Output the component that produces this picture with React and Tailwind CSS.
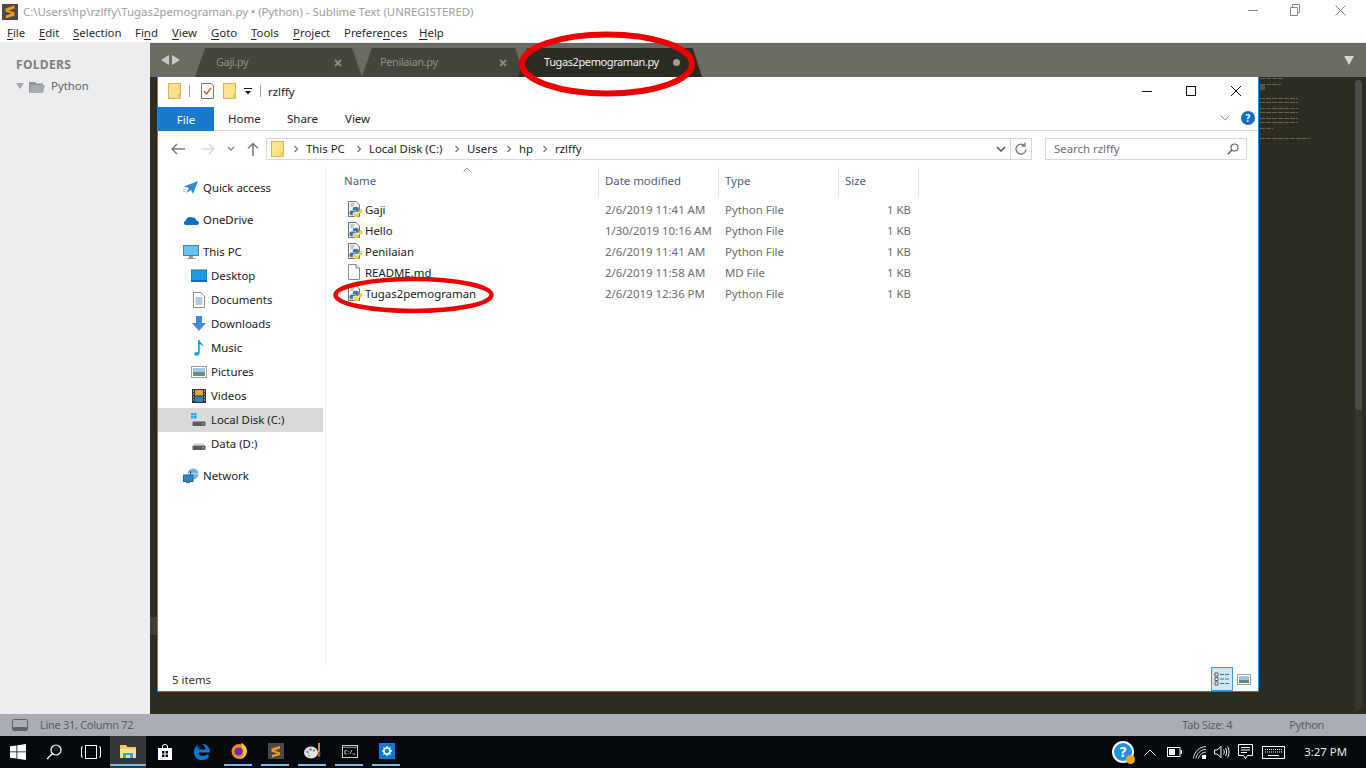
import React from "react";

const Folder = ({ className = "w-[13px] h-[16px]" }) => (
  <svg viewBox="0 0 13 16" className={className}>
    <rect x="0.5" y="0.5" width="12" height="15" fill="#fde18c" stroke="#dcb44c" />
    <rect x="10" y="11" width="3" height="5" fill="#eac45e" />
  </svg>
);

const PyFile = () => (
  <svg viewBox="0 0 16 16" className="w-4 h-4 shrink-0">
    <path d="M1.500 .5H9L12.500 4V15.500H1.500Z" fill="#f6f6f6" stroke="#6f6f6f" />
    <path d="M3.500 3h4M3.500 5h3" stroke="#8b949c" />
    <path d="M8.800 5.800C6.500 5.800 5.800 6.500 5.800 7.800V9H9V9.600H4.600C3.300 9.600 2.500 10.500 2.500 11.900S3.300 14.200 4.600 14.200H5.800V12.800C5.800 11.600 6.800 10.800 8 10.800H10.500C11.300 10.800 11.800 10.200 11.800 9.500V7.800C11.800 6.600 10.800 5.800 8.800 5.800Z" fill="#3a76ab" />
    <path d="M12.400 8.300V9.700C12.400 10.900 11.500 11.500 10.500 11.500H8C7.200 11.500 6.500 12.100 6.500 12.900V14.200C6.500 15.400 7.600 16 9.200 16S12 15.300 12 14.200V13H8.800V12.400H13.400C14.700 12.400 15.500 11.500 15.500 10.200S14.700 8.300 13.400 8.300Z" fill="#f7cf47" />
  </svg>
);

const Blank = () => (
  <svg viewBox="0 0 16 16" className="w-4 h-4 shrink-0">
    <path d="M1.500 .5H9L12.500 4V15.500H1.500Z" fill="#fff" stroke="#8a8a8a" />
    <path d="M9 .5V4H12.500" fill="#eee" stroke="#8a8a8a" />
  </svg>
);

const Ul = ({ a = "", u, b = "" }) => (
  <>
    {a}
    <span className="underline underline-offset-2">{u}</span>
    {b}
  </>
);

const menu = [
  [32, "", "F", "ile"],
  [34, "", "E", "dit"],
  [62, "", "S", "election"],
  [37, "Fi", "n", "d"],
  [39, "", "V", "iew"],
  [40, "", "G", "oto"],
  [42, "", "T", "ools"],
  [51, "", "P", "roject"],
  [75, "Prefere", "n", "ces"],
  [30, "", "H", "elp"],
];

const Tab = ({ w, ml = "", fill, text, color, right, pad, points }) => (
  <div className={`relative h-[29px] flex items-center justify-between ${w} ${ml} ${pad}`}>
    <svg viewBox="0 0 100 29" preserveAspectRatio="none" className="absolute inset-0 w-full h-full">
      <polygon points={points} fill={fill} />
    </svg>
    <span className={`relative text-[11px] tracking-[-0.4px] ${color}`}>{text}</span>
    <span className="relative">{right}</span>
  </div>
);

const TabX = () => (
  <svg viewBox="0 0 8 8" className="w-2 h-2">
    <path d="M1 1l6 6M7 1l-6 6" stroke="#8c8c85" strokeWidth="1.800" />
  </svg>
);

const NavRow = ({ icon, label, indent, active, mb = "" }) => (
  <div className={`h-6 flex items-center ${indent} ${mb} ${active ? "bg-[#d9d9d9]" : ""}`}>
    <span className="w-4 h-4 flex items-center justify-center shrink-0">{icon}</span>
    <span className="text-[11.4px] text-[#1a1a1a] ml-[4px]">{label}</span>
  </div>
);

const Drive = ({ win }) => (
  <svg viewBox="0 0 16 16" className="w-4 h-4">
    {win && <path d="M0 1h2.500v2.500H0zM3 1h2.500v2.500H3zM0 4h2.500v2.500H0zM3 4h2.500v2.500H3z" fill="#18a6ee" />}
    <path d="M2 9.500 3.500 7H12.500L14 9.500Z" fill="#dcdcdc" />
    <rect x="1.500" y="9.500" width="13" height="4.500" rx="1" fill="#5b5b5b" />
    <rect x="11" y="11" width="1.500" height="1.500" fill="#51e34f" />
  </svg>
);

const nav = [
  [
    <svg viewBox="0 0 16 16" className="w-4 h-4"><path d="M15 1 10 14 8 10 3 13 6 8 1 6.500Z" fill="#2f8fdf" /><path d="M0 9h3M0 11.500h2" stroke="#9cc7ea" /></svg>,
    "Quick access", "pl-[25px]", false, "mb-2",
  ],
  [
    <svg viewBox="0 0 16 16" className="w-4 h-4"><path d="M3 13C.5 13 0 9.500 2.500 9 3 6 6 4 9 5.500c2-.5 4 .8 4.200 3 1.800.2 2.800 1.500 2.800 2.500 0 1.200-1 2-2.300 2Z" fill="#0a6fc9" /></svg>,
    "OneDrive", "pl-[25px]", false, "mb-2",
  ],
  [
    <svg viewBox="0 0 16 16" className="w-4 h-4"><rect x=".5" y="1.500" width="15" height="10" fill="#63c6f2" stroke="#5f7f94" /><path d="M6 12h4v2H6zM3.500 14h9v1h-9z" fill="#9a9a9a" /></svg>,
    "This PC", "pl-[25px]", false, "",
  ],
  [
    <svg viewBox="0 0 16 16" className="w-4 h-4"><rect x="0" y="2" width="16" height="11" fill="#1d9be6" stroke="#0f6fb3" /><rect x="0" y="12" width="16" height="2" fill="#0f6fb3" /></svg>,
    "Desktop", "pl-[33px]",
  ],
  [
    <svg viewBox="0 0 16 16" className="w-4 h-4"><path d="M2.500 .5H10L13.500 4V15.500H2.500Z" fill="#fff" stroke="#8a8a8a" /><path d="M4.500 6h7M4.500 8h7M4.500 10h7M4.500 12h7" stroke="#6e93b3" /></svg>,
    "Documents", "pl-[33px]",
  ],
  [
    <svg viewBox="0 0 16 16" className="w-4 h-4"><path d="M5 0h6v7h4l-7 8-7-8h4z" fill="#3a8ddd" /></svg>,
    "Downloads", "pl-[33px]",
  ],
  [
    <svg viewBox="0 0 16 16" className="w-4 h-4"><path d="M7 0h1.500c.5 3 4 3.500 3.500 7-.5-1.500-2-2.500-3.300-2.700V13c0 2-2 3-3.700 2.700C3 15.300 2.700 13.500 4 12.500c1-.7 2-.7 3-.3z" fill="#1c9be8" /></svg>,
    "Music", "pl-[33px]",
  ],
  [
    <svg viewBox="0 0 16 16" className="w-4 h-4"><rect x=".5" y="2.500" width="15" height="11" fill="#fff" stroke="#a0a0a0" /><rect x="2" y="4" width="12" height="4" fill="#9cc9e8" /><rect x="2" y="8" width="12" height="4" fill="#6a8f74" /></svg>,
    "Pictures", "pl-[33px]",
  ],
  [
    <svg viewBox="0 0 16 16" className="w-4 h-4"><rect x="1" y="1" width="14" height="14" fill="#333" /><rect x="4" y="2" width="8" height="5.500" fill="#e0a535" /><rect x="4" y="8.500" width="8" height="5.500" fill="#2f7fc4" /><path d="M2 3h1M2 6h1M2 9h1M2 12h1M13 3h1M13 6h1M13 9h1M13 12h1" stroke="#fff" /></svg>,
    "Videos", "pl-[33px]",
  ],
  [<Drive win />, "Local Disk (C:)", "pl-[33px]", true],
  [<Drive />, "Data (D:)", "pl-[33px]", false, "mb-2"],
  [
    <svg viewBox="0 0 16 16" className="w-4 h-4"><circle cx="10" cy="6" r="5.500" fill="#6fb3de" /><path d="M8 1c-2 3-2 7 0 10M5 6h10" stroke="#cfe6f5" /><rect x="0" y="7" width="10" height="6.500" fill="#2e86c1" stroke="#1d6594" /><path d="M3 14.500h4" stroke="#777" strokeWidth="1.500" /></svg>,
    "Network", "pl-[25px]",
  ],
];

const files = [
  ["Gaji", "2/6/2019 11:41 AM", "Python File", <PyFile />],
  ["Hello", "1/30/2019 10:16 AM", "Python File", <PyFile />],
  ["Penilaian", "2/6/2019 11:41 AM", "Python File", <PyFile />],
  ["README.md", "2/6/2019 11:58 AM", "MD File", <Blank />],
  ["Tugas2pemograman", "2/6/2019 12:36 PM", "Python File", <PyFile />],
];

const Crumb = ({ w, children }) => (
  <span className={`flex items-center ${w} text-[11.4px] text-[#1a1a1a] shrink-0`}>{children}</span>
);
const Sep = () => (
  <svg viewBox="0 0 6 8" className="w-[6px] h-2 mr-[7px] shrink-0">
    <path d="M1.500 1l3 3-3 3" fill="none" stroke="#777" strokeWidth="1.300" />
  </svg>
);

const TaskItem = ({ w = "w-[37px]", children, under, bg = "" }) => (
  <div className={`relative h-8 ${w} ${bg} flex items-center justify-center shrink-0`}>
    {children}
    {under && <div className={`absolute bottom-[2px] h-[2px] bg-[#76b9ed] ${under}`} />}
  </div>
);

const minimapLines = [
  [78, 23], [84, 21], [98, 38], [102, 38], [108, 38], [112, 38], [118, 38], [122, 38], [128, 13], [134, 1], [138, 50],
];

export default function App() {
  return (
    <div className="relative w-[1366px] h-[768px] overflow-hidden flex flex-col bg-white font-['Noto_Sans',sans-serif]">
      {/* Title bar */}
      <div className="h-[24px] flex items-center bg-white shrink-0">
        <svg viewBox="0 0 16 16" className="w-4 h-4 ml-[2px] shrink-0">
          <rect width="16" height="16" fill="#4a4a4a" />
          <path d="M3 6 12 3V6L6 8 12 10V13L3 16 3.500 13 9 11 3 9Z" fill="#f89820" transform="translate(0.500 -1.500)" />
        </svg>
        <span className="ml-[5px] text-[11.4px] text-[#9d9d9d] whitespace-nowrap">C:\Users\hp\rzlffy\Tugas2pemograman.py • (Python) - Sublime Text (UNREGISTERED)</span>
        <div className="ml-auto flex items-center -mt-[4px]">
          <svg viewBox="0 0 10 10" className="w-[10px] h-[10px] mr-[32px]"><path d="M0 5.500h10" stroke="#888" /></svg>
          <svg viewBox="0 0 10 12" className="w-[10px] h-3 mr-[35px]"><path d="M.5 3.500h7v8h-7zM2.500 3.500v-3h7v8h-2" fill="none" stroke="#888" /></svg>
          <svg viewBox="0 0 11 11" className="w-[11px] h-[11px] mr-[20px]"><path d="M.5.5l10 10M10.500.5l-10 10" stroke="#888" /></svg>
        </div>
      </div>
      {/* Menu */}
      <div className="h-[19px] flex items-center pl-[7px] bg-white border-b border-[#f0f0f0] shrink-0">
        {menu.map(([w, a, u, b]) => (
          <span key={u + b} className="text-[11.4px] text-[#2b2b2b] shrink-0" style={{ width: w }}>
            <Ul a={a} u={u} b={b} />
          </span>
        ))}
      </div>

      {/* Main */}
      <div className="flex h-[671px] shrink-0">
        {/* Sidebar */}
        <div className="w-[150px] bg-[#ebedef] shrink-0 pl-4 pt-[13px]">
          <div className="text-[12px] font-bold tracking-[0.35px] text-[#7b7f85] leading-[18px]">FOLDERS</div>
          <div className="flex items-center mt-[3px] h-[18px]">
            <svg viewBox="0 0 8 6" className="w-2 h-[6px]"><path d="M0 0h8L4 6Z" fill="#a5a8ac" /></svg>
            <svg viewBox="0 0 16 13" className="w-4 h-[13px] ml-[5px]"><path d="M0 2h6l1.500 1.500H14V5H3L1 12H0Z" fill="#909396" /><path d="M3 5h13l-2 8H0Z" fill="#a8abaf" /></svg>
            <span className="ml-[6px] text-[11.4px] text-[#5e6268]">Python</span>
          </div>
        </div>

        {/* Right */}
        <div className="flex-1 flex flex-col min-w-0">
          {/* Tabs */}
          <div className="h-[34px] bg-[#6b6b63] flex items-end shrink-0 relative">
            <div className="w-[45px] h-[34px] pl-[11px] flex items-center gap-[3px] shrink-0">
              <svg viewBox="0 0 8 10" className="w-2 h-[10px]"><path d="M8 0v10L0 5Z" fill="#c9c9c4" /></svg>
              <svg viewBox="0 0 8 10" className="w-2 h-[10px]"><path d="M0 0v10l8-5Z" fill="#c9c9c4" /></svg>
            </div>
            <Tab w="w-[167px]" pad="pl-[21px] pr-[20px]" fill="#45453e" text="Gaji.py" color="text-[#8f8f87]" right={<TabX />} points="6,0 94,0 100,29 0,29" />
            <Tab w="w-[163px]" pad="pl-[18px] pr-[18px]" fill="#45453e" text="Penilaian.py" color="text-[#8f8f87]" right={<TabX />} points="6,0 94,0 100,29 0,29" />
            <Tab w="w-[184px]" ml="-ml-[7px]" pad="pl-[26px] pr-[22px]" fill="#2c2c24" text="Tugas2pemograman.py" color="text-[#f2f2f0]" right={<span className="block w-[7px] h-[7px] rounded-full bg-[#a0a09a]" />} points="5,0 95,0 100,29 0,29" />
            <div className="ml-auto h-[34px] flex items-center pr-[12px]">
              <svg viewBox="0 0 10 9" className="w-[10px] h-[9px]"><path d="M0 0h10L5 9Z" fill="#d5d5d0" /></svg>
            </div>
          </div>

          {/* Editor */}
          <div className="flex-1 bg-[#2c2c24] flex min-h-0">
            {/* Gutter */}
            <div className="w-[7px] shrink-0 pt-[540px]">
              <div className="h-[18px] bg-[#3e3e36]" />
            </div>
            {/* Explorer */}
            <div className="w-[1102px] h-[616px] -mt-px bg-white border border-[#1b86d6] flex flex-col shrink-0">
              {/* QAT */}
              <div className="h-[28px] flex items-center pl-[10px] shrink-0">
                <Folder className="w-[13px] h-[16px]" />
                <div className="w-px h-3 bg-[#a0a0a0] ml-[8px] mr-[11px]" />
                <svg viewBox="0 0 13 16" className="w-[13px] h-4"><path d="M.5.5H10L12.500 3V15.500H.5Z" fill="#fff" stroke="#777" /><path d="M3 8l2.500 3L10 5" fill="none" stroke="#d9552b" strokeWidth="1.300" /></svg>
                <div className="ml-[9px]"><Folder /></div>
                <svg viewBox="0 0 8 8" className="w-2 h-2 ml-2"><path d="M0 1.500h8" stroke="#111" /><path d="M1 4h6L4 7.500Z" fill="#111" /></svg>
                <div className="w-px h-3 bg-[#a0a0a0] ml-[8px] mr-[7px]" />
                <span className="text-[11.4px] text-[#1a1a1a] mt-[2px]">rzlffy</span>
                <div className="ml-auto flex items-center">
                  <svg viewBox="0 0 10 10" className="w-[10px] h-[10px] mr-[34px]"><path d="M0 5.500h10" stroke="#111" /></svg>
                  <svg viewBox="0 0 10 10" className="w-[10px] h-[10px] mr-[35px]"><rect x=".5" y=".5" width="9" height="9" fill="none" stroke="#111" /></svg>
                  <svg viewBox="0 0 10 10" className="w-[10px] h-[10px] mr-[17px]"><path d="M0 0l10 10M10 0L0 10" stroke="#111" /></svg>
                </div>
              </div>
              {/* Ribbon tabs */}
              <div className="h-[26px] flex items-end border-b border-[#d9d9d9] shrink-0">
                <div className="w-[56px] h-[24px] pt-[1px] bg-[#1979ca] text-white text-[11.5px] flex items-center justify-center mb-[-1px]">File</div>
                <span className="ml-[14px] w-[59px] h-[24px] pt-[2px] flex items-center text-[11.5px] text-[#222]">Home</span>
                <span className="w-[58px] h-[24px] pt-[2px] flex items-center text-[11.5px] text-[#222]">Share</span>
                <span className="w-[40px] h-[24px] pt-[2px] flex items-center text-[11.5px] text-[#222]">View</span>
                <div className="ml-auto h-[24px] flex items-center pr-[3px]">
                  <svg viewBox="0 0 10 6" className="w-[10px] h-[6px] mr-[11px]"><path d="M.5.5 5 5 9.500.5" fill="none" stroke="#9a9a9a" /></svg>
                  <span className="w-[14px] h-[14px] rounded-full bg-[#0f6fc6] text-white text-[10px] font-bold flex items-center justify-center leading-none">?</span>
                </div>
              </div>
              {/* Address */}
              <div className="h-[36px] flex items-center pl-[13px] pr-[11px] shrink-0">
                <svg viewBox="0 0 14 12" className="w-[14px] h-3"><path d="M14 6H1.500M6 1 1 6l5 5" fill="none" stroke="#7a7a7a" strokeWidth="1.500" /></svg>
                <svg viewBox="0 0 14 12" className="w-[14px] h-3 ml-[16px]"><path d="M0 6h12.500M8 1l5 5-5 5" fill="none" stroke="#d9d9d9" strokeWidth="1.500" /></svg>
                <svg viewBox="0 0 8 6" className="w-2 h-[6px] ml-[12px]"><path d="M1 1l3 3 3-3" fill="none" stroke="#8a8a8a" strokeWidth="1.300" /></svg>
                <svg viewBox="0 0 12 14" className="w-3 h-[14px] ml-[12px]"><path d="M6 14V1.500M1 6.500l5-5 5 5" fill="none" stroke="#7a7a7a" strokeWidth="1.500" /></svg>
                <div className="ml-[7px] w-[766px] h-[22px] border border-[#d9d9d9] flex items-center pl-[4px] shrink-0">
                  <Folder />
                  <span className="w-[9px]" />
                  <Sep />
                  <Crumb w="w-[50px]">This PC</Crumb>
                  <Sep />
                  <Crumb w="w-[85px]">Local Disk (C:)</Crumb>
                  <Sep />
                  <Crumb w="w-[39px]">Users</Crumb>
                  <Sep />
                  <Crumb w="w-[23px]">hp</Crumb>
                  <Sep />
                  <Crumb w="w-[40px]">rzlffy</Crumb>
                  <div className="ml-auto flex items-center h-full">
                    <svg viewBox="0 0 10 6" className="w-[10px] h-[6px] mr-[4px]"><path d="M1 1l4 4 4-4" fill="none" stroke="#555" strokeWidth="1.500" /></svg>
                    <div className="w-px h-full bg-[#d9d9d9]" />
                    <svg viewBox="0 0 14 14" className="w-[14px] h-[14px] mx-[3px]"><path d="M11 4A5 5 0 1 0 12 7.500M11 .5V4H7.500" fill="none" stroke="#777" strokeWidth="1.300" /></svg>
                  </div>
                </div>
                <div className="ml-auto w-[202px] h-[22px] border border-[#d9d9d9] flex items-center pl-[8px] pr-[7px]">
                  <span className="text-[11.4px] text-[#6d6d6d]">Search rzlffy</span>
                  <svg viewBox="0 0 12 12" className="w-3 h-3 ml-auto"><circle cx="7.500" cy="4.500" r="3.500" fill="none" stroke="#666" strokeWidth="1.200" /><path d="M5 7 .8 11.200" stroke="#666" strokeWidth="1.600" /></svg>
                </div>
              </div>
              {/* Body */}
              <div className="flex-1 flex min-h-0">
                {/* Nav */}
                <div className="w-[168px] border-r border-[#f0f0f0] pt-[9px] shrink-0">
                  <div className="w-[165px]">
                    {nav.map(([icon, label, indent, active, mb]) => (
                      <NavRow key={label} icon={icon} label={label} indent={indent} active={active} mb={mb || ""} />
                    ))}
                  </div>
                </div>
                {/* List */}
                <div className="flex-1 flex flex-col min-w-0 relative">
                  <div className="flex h-[30px] items-stretch text-[11.4px] text-[#4c607a] shrink-0 relative">
                    <svg viewBox="0 0 8 5" className="absolute left-[137px] top-0 w-2 h-[5px]"><path d="M.5 4.500 4 1l3.500 3.500" fill="none" stroke="#999" /></svg>
                    <div className="w-[273px] pl-[18px] pb-[2px] flex items-center border-r border-[#e5e5e5] shrink-0">Name</div>
                    <div className="w-[120px] pl-[6px] pb-[2px] flex items-center border-r border-[#e5e5e5] shrink-0">Date modified</div>
                    <div className="w-[120px] pl-[6px] pb-[2px] flex items-center border-r border-[#e5e5e5] shrink-0">Type</div>
                    <div className="w-[80px] pl-[6px] pb-[2px] flex items-center border-r border-[#e5e5e5] shrink-0">Size</div>
                  </div>
                  <div className="pt-[2px]">
                    {files.map(([name, date, type, icon]) => (
                      <div key={name} className="flex h-[21px] items-center text-[11.4px]">
                        <div className="w-[273px] pl-[21px] flex items-center shrink-0 text-[#1a1a1a]">
                          {icon}
                          <span className="ml-[2px]">{name}</span>
                        </div>
                        <div className="w-[120px] pl-[6px] text-[#6d6d6d] shrink-0 whitespace-nowrap">{date}</div>
                        <div className="w-[120px] pl-[6px] text-[#6d6d6d] shrink-0">{type}</div>
                        <div className="w-[72px] text-right text-[#6d6d6d] shrink-0">1 KB</div>
                      </div>
                    ))}
                  </div>
                </div>
              </div>
              {/* Status */}
              <div className="h-[24px] flex items-center pl-[14px] pr-[7px] shrink-0">
                <span className="text-[11.4px] text-[#333] mt-[2px]">5 items</span>
                <div className="ml-auto flex items-center">
                  <div className="w-[22px] h-[24px] border border-[#3a9bdc] bg-[#cce8ff] flex items-center justify-center">
                    <svg viewBox="0 0 16 14" className="w-4 h-[14px]"><path d="M1 1h3v3H1zM1 5.500h3v3H1zM1 10h3v3H1z" fill="#fff" stroke="#555" /><path d="M6 2.500h4M11 2.500h4M6 7h4M11 7h4M6 11.500h4M11 11.500h4" stroke="#666" /></svg>
                  </div>
                  <svg viewBox="0 0 14 11" className="w-[14px] h-[11px] ml-[4px]"><rect x=".5" y=".5" width="13" height="10" fill="#fff" stroke="#a0a0a0" /><rect x="2" y="2" width="10" height="4" fill="#9cc9e8" /><rect x="2" y="6" width="10" height="3" fill="#5f8a72" /></svg>
                </div>
              </div>
            </div>

            {/* Minimap */}
            <div className="flex-1 relative min-w-0">
              <svg viewBox="0 0 95 70" className="w-[95px] h-[70px] block">
                {minimapLines.map(([y, w]) => (
                  <path key={y} d={`M1 ${y - 77 + 0.5}h${w}`} stroke="#66663a" strokeWidth="1" strokeDasharray="5 1" />
                ))}
                <rect x="1" y="8" width="5" height="5" fill="#55554a" />
              </svg>
              <div className="absolute right-[4px] top-[3px] bottom-[4px] w-[7px] rounded-sm bg-[#35352e]">
                <div className="h-[330px] rounded-sm bg-[#4d4d47]" />
              </div>
            </div>
          </div>
        </div>
      </div>

      {/* Sublime status */}
      <div className="h-[22px] bg-[#a9aeb6] flex items-center pl-3 shrink-0">
        <svg viewBox="0 0 16 12" className="w-4 h-3"><rect x=".5" y=".5" width="15" height="11" rx="1" fill="none" stroke="#5f6268" /><rect x="1" y="8" width="14" height="3" fill="#5f6268" /></svg>
        <span className="ml-3 text-[11px] tracking-[-0.3px] text-[#5a5d63]">Line 31, Column 72</span>
        <span className="ml-auto text-[11px] tracking-[-0.3px] text-[#5a5d63]">Tab Size: 4</span>
        <span className="ml-[57px] mr-[42px] text-[11px] tracking-[-0.3px] text-[#5a5d63]">Python</span>
      </div>

      {/* Taskbar */}
      <div className="h-8 bg-[#05080c] flex items-center shrink-0">
        <TaskItem w="w-[36px]">
          <svg viewBox="0 0 16 16" className="w-4 h-4"><path d="M0 2.300 6.500 1.400V7.500H0ZM7.300 1.300 16 0V7.500H7.300ZM0 8.300H6.500V14.500L0 13.700ZM7.300 8.300H16V16L7.300 14.800Z" fill="#fff" /></svg>
        </TaskItem>
        <TaskItem w="w-[36px]">
          <svg viewBox="0 0 16 16" className="w-4 h-4"><circle cx="10" cy="6" r="5" fill="none" stroke="#fff" strokeWidth="1.200" /><path d="M6.500 9.500 1 15" stroke="#fff" strokeWidth="1.300" /></svg>
        </TaskItem>
        <TaskItem w="w-[38px]">
          <svg viewBox="0 0 20 14" className="w-5 h-[14px]"><rect x="4.500" y=".5" width="11" height="13" fill="none" stroke="#fff" /><path d="M2 2H.5v10H2M18 2h1.500v10H18" fill="none" stroke="#fff" /></svg>
        </TaskItem>
        <TaskItem w="w-[36px]" bg="bg-[#33363a]" under="left-0 right-0">
          <svg viewBox="0 0 16 16" className="w-4 h-4 -mt-[2px]"><path d="M0 2h6l1.500 2H16v3H0Z" fill="#f4c95d" /><path d="M0 6h16v9H0Z" fill="#fbe08c" /><path d="M3 10h10v5h-3v-3H6v3H3Z" fill="#2aa5dc" /></svg>
        </TaskItem>
        <TaskItem w="w-[37px]">
          <svg viewBox="0 0 14 16" className="w-[14px] h-4"><path d="M4 4V2.500C4 1 5.500 0 7 0s3 1 3 2.500V4h4v12H0V4Zm1 0h4V2.500C9 1.500 8 1 7 1S5 1.500 5 2.500Z" fill="#fff" /><path d="M4 7h2.500v2.500H4zM7.500 7H10v2.500H7.500zM4 10.500h2.500V13H4zM7.500 10.500H10V13H7.500z" fill="#05080c" /></svg>
        </TaskItem>
        <TaskItem w="w-[37px]">
          <svg viewBox="0 0 16 16" className="w-4 h-4"><path d="M8 0c4.500 0 8 3 8 8.500H4.500c.2 2 1.800 3.500 4 3.500 2 0 3.800-.7 6-2v4c-1.800 1.200-4 2-6.500 2C3 16 0 12.500 0 8.200 0 4.500 2 1.500 5 .5 3.800 1.800 3.200 3 3 4.500 4.500 3 6 2.800 8 2.800c-1.700 0-3 1.200-3.400 2.700h7C11.500 3.500 10 1.500 8 0Z" fill="#0b78d6" /></svg>
        </TaskItem>
        <TaskItem w="w-[37px]" under="left-[4px] right-[5px]">
          <svg viewBox="0 0 16 16" className="w-4 h-4 -mt-[2px]"><circle cx="8" cy="8.500" r="7.500" fill="#f5872a" /><circle cx="7.500" cy="8.500" r="4" fill="#6b2fa5" /><path d="M10 0c3 1 6 4 6 8 0 4-3 8-7.500 8C12 14 13 11 12.500 8 12 5 10 2 10 0Z" fill="#ffc629" /></svg>
        </TaskItem>
        <TaskItem w="w-[37px]" under="left-[4px] right-[5px]">
          <svg viewBox="0 0 16 16" className="w-4 h-4 -mt-[2px]"><rect width="16" height="16" fill="#4a4a4a" /><path d="M3.500 5.500 12 3V5.500L6.500 7.500 12 9.500V12L4 14.500V12L9.500 10.500 3.500 8.500Z" fill="#f89820" /></svg>
        </TaskItem>
        <TaskItem w="w-[37px]" under="left-[4px] right-[5px]">
          <svg viewBox="0 0 18 16" className="w-[18px] h-4 -mt-[2px]"><ellipse cx="7" cy="9.500" rx="7" ry="6" fill="#dfe7ee" /><circle cx="3.500" cy="9" r="1.300" fill="#3aa0e8" /><circle cx="6.500" cy="6.500" r="1.300" fill="#e8473a" /><circle cx="10" cy="7.500" r="1.300" fill="#58b947" /><circle cx="5" cy="12.500" r="1.300" fill="#f3b63c" /><path d="M15 0v9" stroke="#c98b3d" strokeWidth="2" /><path d="M14 9h2.500l-.5 5h-2z" fill="#a0541d" /></svg>
        </TaskItem>
        <TaskItem w="w-[37px]" under="left-[4px] right-[5px]">
          <div className="w-4 h-[13px] -mt-[2px] border border-[#d0d0d0] bg-black flex flex-col">
            <svg viewBox="0 0 16 13" className="w-full h-full"><path d="M0 1.500h16" stroke="#d0d0d0" /><path d="M2 5.500h2M2 5.500v4h2M6 6v1M6 8.500v1M8 9.500 10 5M11 9.500h3" stroke="#eee" fill="none" /></svg>
          </div>
        </TaskItem>
        <TaskItem w="w-[37px]" under="left-[4px] right-[5px]">
          <svg viewBox="0 0 16 16" className="w-4 h-4 -mt-[2px]"><rect width="16" height="16" fill="#0a78d7" /><circle cx="8" cy="8" r="3" fill="none" stroke="#fff" strokeWidth="1.600" /><path d="M8 3v2M8 11v2M3 8h2M11 8h2M4.500 4.500l1.300 1.300M10.200 10.200l1.300 1.300M11.500 4.500l-1.300 1.300M5.800 10.200l-1.300 1.300" stroke="#fff" strokeWidth="1.300" /></svg>
        </TaskItem>

        <div className="ml-auto flex items-center h-8 pr-[19px]">
          <div className="relative w-[22px] h-[22px] rounded-full bg-white flex items-center justify-center">
            <span className="w-[18px] h-[18px] rounded-full bg-[#1f8fe0] text-white text-[14px] font-bold flex items-center justify-center leading-none">?</span>
            <span className="absolute -right-[1px] -bottom-[1px] w-[9px] h-[9px] rounded-full bg-[#f4a526]" />
          </div>
          <svg viewBox="0 0 12 7" className="w-3 h-[7px] ml-[10px]"><path d="M.5 6.500 6 1l5.500 5.500" fill="none" stroke="#fff" /></svg>
          <svg viewBox="0 0 15 10" className="w-[15px] h-[10px] ml-[11px]"><rect x=".5" y=".5" width="12.500" height="9" fill="none" stroke="#fff" /><rect x="2" y="2" width="6" height="6" fill="#fff" /><rect x="13.500" y="3" width="1.500" height="4" fill="#fff" /></svg>
          <svg viewBox="0 0 14 13" className="w-[14px] h-[13px] ml-[11px]"><path d="M.5 12.500C1 6 6 1 13 .5M3 12.500C3.500 8 7.500 3.700 13 3.200M5.500 12.500C6 9.500 8.500 6.500 13 6" fill="none" stroke="#d8d8d8" /><rect x="9" y="9" width="4" height="4" fill="#fff" /></svg>
          <svg viewBox="0 0 16 14" className="w-4 h-[14px] ml-[7px]"><path d="M.5 5H3L7 1.500V12.500L3 9H.5Z" fill="none" stroke="#fff" /><path d="M9.500 4.500c1 1.500 1 3.500 0 5M11.500 3c1.500 2.500 1.500 5.500 0 8M13.500 1.500c2 3 2 8 0 11" fill="none" stroke="#fff" /></svg>
          <svg viewBox="0 0 15 16" className="w-[15px] h-4 ml-[8px]"><path d="M.5.5h14v11H9.500l-2 3-2-3H.5Z" fill="none" stroke="#fff" /><path d="M3 3.500h9M3 6h9M3 8.500h6" stroke="#fff" /></svg>
          <svg viewBox="0 0 23 13" className="w-[23px] h-[13px] ml-[9px]"><rect x=".5" y=".5" width="22" height="12" fill="none" stroke="#fff" /><path d="M3 3.500h17M3 6h17" stroke="#fff" strokeDasharray="1 1" /><path d="M6 9.500h11" stroke="#fff" /></svg>
          <span className="ml-[19px] text-[11.4px] text-[#e8e8e8] whitespace-nowrap">3:27 PM</span>
        </div>
      </div>

      {/* Red annotation ellipses */}
      <svg viewBox="0 0 180 68" className="absolute left-[517px] top-[29px] w-[180px] h-[68px] pointer-events-none">
        <ellipse cx="90" cy="35" rx="85" ry="29.500" fill="none" stroke="#ee0000" strokeWidth="6" />
      </svg>
      <svg viewBox="0 0 164 40" className="absolute left-[331px] top-[275px] w-[164px] h-[40px] pointer-events-none">
        <ellipse cx="82.500" cy="20" rx="78" ry="16" fill="none" stroke="#ee0000" strokeWidth="4.500" />
      </svg>
    </div>
  );
}
